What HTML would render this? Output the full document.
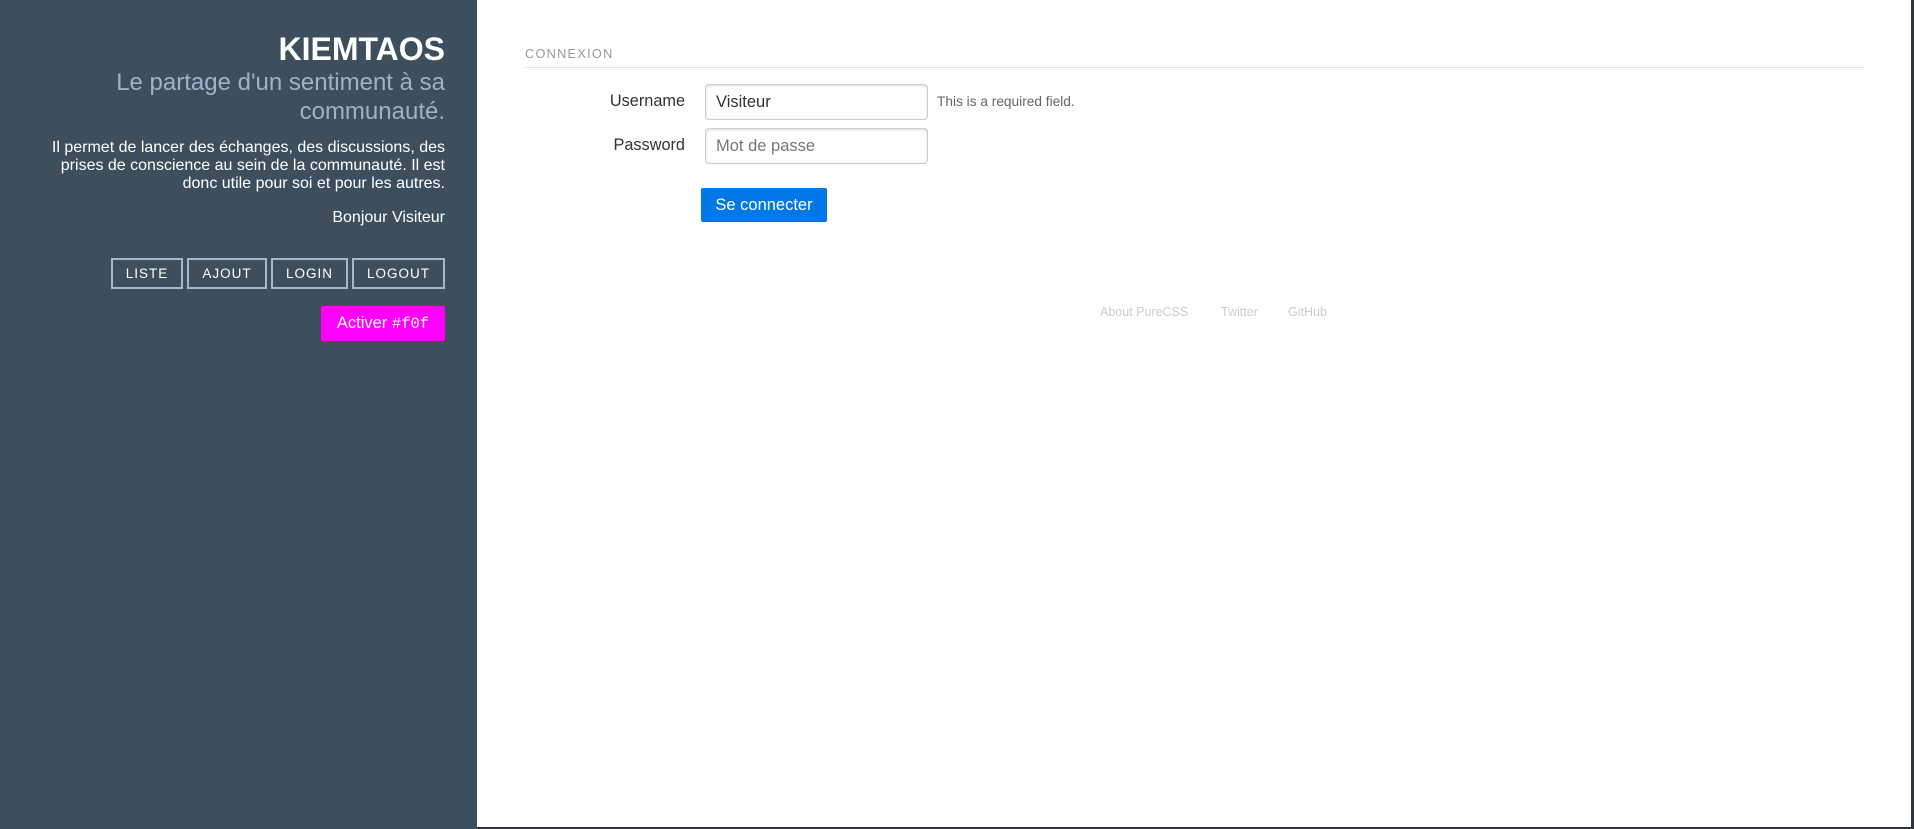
<!DOCTYPE html>
<html><head><meta charset="utf-8"><style>
*{box-sizing:border-box;margin:0;padding:0}
body{width:1914px;height:829px;overflow:hidden;background:#fff;font-family:"Liberation Sans",sans-serif;position:relative}
.side{position:absolute;left:0;top:0;width:477px;height:829px;background:#3d4e5c}
.r{position:absolute;right:1469px;text-align:right;white-space:nowrap}
.ab{position:absolute;white-space:nowrap}
.btn{position:absolute;top:258px;height:31px;border:2px solid #a3b9cc;color:#fff;font-size:13.5px;letter-spacing:1px;text-align:center;line-height:27px}
.inp{position:absolute;left:705px;width:223px;height:36px;border:1px solid #ccc;border-radius:4px;box-shadow:inset 0 1px 3px #ddd;font-size:16.5px;padding-left:10px;line-height:34px}
.lbl{position:absolute;right:1229px;font-size:16.3px;color:#333}
.ft{position:absolute;top:305px;font-size:12.5px;color:#ccc}
</style></head><body>
<div class="side"></div>
<div class="r" style="top:31px;font-size:32px;font-weight:bold;color:#fff">KIEMTAOS</div>
<div class="r" style="top:68px;font-size:24px;line-height:29px;color:#9fb3c8">Le partage d'un sentiment à sa<br>communauté.</div>
<div class="r" style="top:139px;font-size:16px;line-height:18px;color:#fff">Il permet de lancer des échanges, des discussions, des<br>prises de conscience au sein de la communauté. Il est<br>donc utile pour soi et pour les autres.</div>
<div class="r" style="top:209px;font-size:16px;color:#fff">Bonjour Visiteur</div>
<div class="btn" style="left:111px;width:72px">LISTE</div>
<div class="btn" style="left:187px;width:80px">AJOUT</div>
<div class="btn" style="left:271px;width:77px">LOGIN</div>
<div class="btn" style="left:352px;width:93px">LOGOUT</div>
<div class="ab" style="left:321px;top:306px;width:124px;height:35px;background:#f0f;border-radius:2px;color:#fff;font-size:16.5px;line-height:35px;text-align:center">Activer <span style="font-family:'Liberation Mono',monospace;font-size:15.5px">#f0f</span></div>

<div class="ab" style="left:525px;top:47px;font-size:12.7px;letter-spacing:1.3px;color:#999">CONNEXION</div>
<div class="ab" style="left:525px;top:67px;width:1340px;height:1px;background:#e5e5e5"></div>
<div class="lbl" style="top:92px">Username</div>
<div class="inp" style="top:84px;color:#333">Visiteur</div>
<div class="ab" style="left:937px;top:94px;font-size:13.7px;color:#666">This is a required field.</div>
<div class="lbl" style="top:136px">Password</div>
<div class="inp" style="top:128px;color:#777">Mot de passe</div>
<div class="ab" style="left:701px;top:188px;width:126px;height:34px;background:#0078e7;border-radius:2px;color:#fff;font-size:16.5px;line-height:34px;text-align:center">Se connecter</div>
<div class="ft" style="left:1100px">About PureCSS</div>
<div class="ft" style="left:1221px">Twitter</div>
<div class="ft" style="left:1288px">GitHub</div>
<div class="ab" style="left:1911px;top:0;width:3px;height:829px;background:#2f3440"></div>
<div class="ab" style="left:477px;top:827px;width:1437px;height:2px;background:#2f3440"></div>
</body></html>
